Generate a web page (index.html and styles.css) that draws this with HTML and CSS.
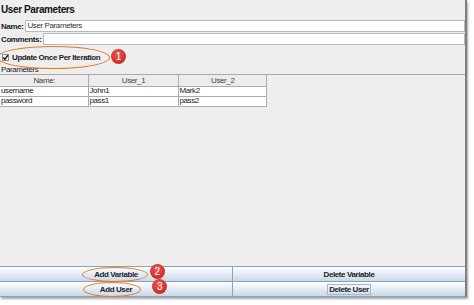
FILE: index.html
```
<!DOCTYPE html>
<html>
<head>
<meta charset="utf-8">
<link rel="stylesheet" href="styles.css">
</head>
<body>
<div class="panel">
  <div class="title">User Parameters</div>
  <div class="field-row">
    <span class="lbl">Name:</span>
    <div class="input">User Parameters</div>
  </div>
  <div class="field-row">
    <span class="lbl">Comments:</span>
    <div class="input"></div>
  </div>
  <div class="check-row">
    <span class="note note-1">
      <span class="cb"><svg width="7" height="7" viewBox="0 0 7 7"><path d="M1.2 3.6 L2.8 5.3 L5.9 1.3" fill="none" stroke="#1a1a1a" stroke-width="1.4"/></svg></span>
      <span class="cb-label">Update Once Per Iteration</span>
      <span class="ring"></span>
      <span class="badge">1</span>
    </span>
  </div>
  <div class="params-label">Parameters</div>
  <div class="params">
    <table class="grid">
      <thead>
        <tr><th>Name:</th><th>User_1</th><th>User_2</th></tr>
      </thead>
      <tbody>
        <tr><td>username</td><td>John1</td><td>Mark2</td></tr>
        <tr><td>password</td><td>pass1</td><td>pass2</td></tr>
      </tbody>
    </table>
  </div>
  <div class="buttons">
    <div class="btn btn-left"><span class="note note-btn">Add Variable<span class="ring"></span><span class="badge">2</span></span></div>
    <div class="btn"><span>Delete Variable</span></div>
    <div class="btn btn-left"><span class="note note-btn note-user">Add User<span class="ring"></span><span class="badge">3</span></span></div>
    <div class="btn"><span class="focus">Delete User</span></div>
  </div>
</div>
</body>
</html>
```
FILE: styles.css
```
* { box-sizing: border-box; }
html, body { margin: 0; padding: 0; }
body {
  background: #ffffff;
  width: 474px;
  height: 305px;
  overflow: hidden;
  font-family: "Liberation Sans", Arial, sans-serif;
  font-size: 8px;
  letter-spacing: -0.4px;
  color: #1a1a1a;
}
.panel {
  width: 467px;
  height: 297px;
  background: #eeeeee;
  border-right: 2px solid #7f7f7f;
  box-shadow: 1px 2px 2px rgba(0,0,0,0.35);
  display: flex;
  flex-direction: column;
  position: relative;
}
.title {
  font-size: 10px;
  font-weight: bold;
  letter-spacing: -0.4px;
  line-height: 14px;
  padding: 3px 0 0 1px;
  height: 20px;
  color: #111;
}
.field-row {
  display: flex;
  align-items: center;
  height: 12px;
  margin-bottom: 1px;
  padding-left: 1px;
}
.lbl {
  font-weight: bold;
  margin-right: 2px;
  color: #222;
}
.input {
  flex: 1;
  height: 12px;
  background: #ffffff;
  border: 1px solid #b9b9b9;
  line-height: 10px;
  padding-left: 1px;
  color: #333;
}
.check-row {
  height: 18px;
  margin-top: 2px;
  display: flex;
  align-items: center;
  padding-left: 2px;
}
.note { position: relative; display: inline-flex; align-items: center; }
.cb {
  width: 7px;
  height: 7px;
  background: #fff;
  border: 1px solid #8c8c8c;
  display: inline-flex;
  margin-right: 3px;
}
.cb svg { position: relative; left: -1px; top: -1px; overflow: visible; }
.cb-label { font-weight: bold; }
.ring {
  position: absolute;
  border: 1.5px solid #e07d27;
  border-radius: 50%;
}
.note-1 .ring { left: -5px; right: -10px; top: -7px; bottom: -7px; }
.badge {
  position: absolute;
  width: 15px;
  height: 15px;
  border-radius: 50%;
  background: radial-gradient(circle at 45% 35%, #ec5a52, #cf2b27 70%);
  color: #fff;
  font-size: 10px;
  letter-spacing: 0;
  line-height: 15px;
  text-align: center;
  font-weight: normal;
}
.note-1 .badge { left: 109px; top: -4px; }
.params-label {
  height: 8px;
  line-height: 8px;
  padding-left: 1px;
  color: #222;
}
.params {
  border-top: 1px solid #a8a8a8;
}
.grid {
  border-collapse: collapse;
  table-layout: fixed;
  width: 267px;
}
.grid th, .grid td {
  border: 1px solid #acacac;
  padding: 0 0 0 1px;
  font-weight: normal;
  white-space: nowrap;
  overflow: hidden;
}
.grid th:nth-child(1), .grid td:nth-child(1) { width: 88px; }
.grid th:nth-child(2), .grid td:nth-child(2) { width: 90px; }
.grid th {
  background: #ececec;
  height: 11px;
  line-height: 9px;
  text-align: center;
  color: #444;
  border-top: 0;
}
.grid td {
  background: #ffffff;
  height: 10px;
  line-height: 8px;
  color: #222;
}
.grid th:first-child, .grid td:first-child { border-left: 0; }
.buttons {
  margin-top: auto;
  display: grid;
  grid-template-columns: 233px 1fr;
  border-top: 1px solid #8ea2b6;
}
.btn {
  height: 15px;
  display: flex;
  align-items: center;
  justify-content: center;
  font-weight: bold;
  color: #222;
  background: linear-gradient(#fdfeff, #e6eef7 45%, #c9d8e8);
  border-bottom: 1px solid #8ea2b6;
}
.btn-left { border-right: 1px solid #8ea2b6; }
.note-btn .ring { left: -12px; right: -10px; top: -3px; bottom: -3px; }
.note-btn .badge { left: calc(100% + 12px); top: -6px; }
.note-user .ring { left: -17px; right: -9px; }
.note-user .badge { left: calc(100% + 20px); }
.focus { outline: 1px solid #a9b6c4; outline-offset: 0; padding: 0 1px; }
```
